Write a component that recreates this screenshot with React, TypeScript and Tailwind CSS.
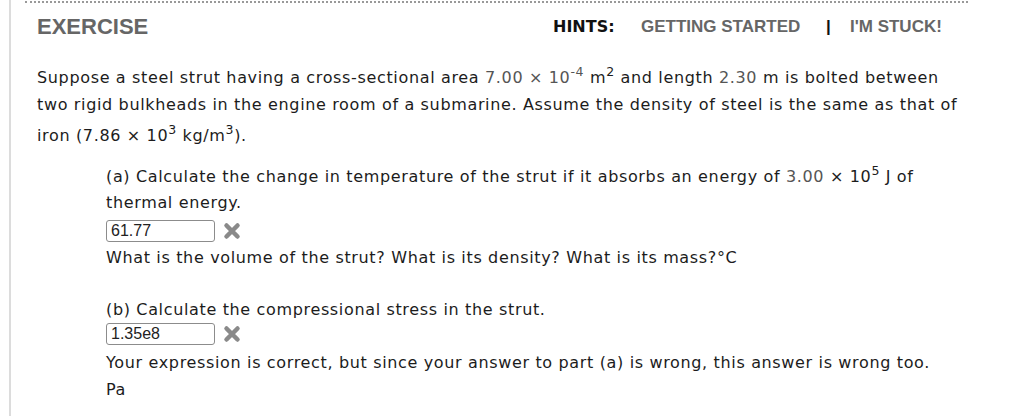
import React from "react";

const Num = ({ children }: { children: React.ReactNode }) => (
  <span className="text-[#555]">{children}</span>
);

const Sup = ({ children, gray }: { children: React.ReactNode; gray?: boolean }) => (
  <sup className={"text-[12.5px] top-[-0.6em] " + (gray ? "text-[#555]" : "")}>{children}</sup>
);

const XIcon = () => (
  <svg width="18" height="18" viewBox="0 0 18 18" className="ml-[8px]">
    <path d="M3.5 3.5 L14.5 14.5 M14.5 3.5 L3.5 14.5" stroke="#8a8a8a" strokeWidth="4.5" strokeLinecap="round" />
  </svg>
);

const Answer = ({ value }: { value: string }) => (
  <div className="flex items-center h-[22px]">
    <div className="w-[109px] h-[22px] border border-[#8c8c8c] rounded-[3px] px-[4px] flex items-center text-[16px] tracking-normal text-[#222] font-['Liberation_Sans',Arial,sans-serif]">
      {value}
    </div>
    <XIcon />
  </div>
);

export default function App() {
  return (
    <div className="w-[1024px] h-[416px] bg-white overflow-hidden flex font-['DejaVu_Sans',Verdana,sans-serif] text-[#1c1c1c]">
      <div className="w-[9px] shrink-0" />
      <div className="w-[2px] shrink-0 bg-[#dcdcdc]" />
      <div className="flex-1 pl-[14px]">
        <div className="w-[943px] border-t-2 border-dotted border-[#999] mt-[1px]" />
        <div className="flex items-center h-[47px] pl-[12px] font-['Liberation_Sans',Arial,sans-serif] font-bold whitespace-nowrap">
          <span className="text-[22px] text-[#666] w-[516px]">EXERCISE</span>
          <span className="text-[16px] text-[#111] w-[88px] font-['DejaVu_Sans',Verdana,sans-serif]">HINTS:</span>
          <span className="text-[17px] text-[#666] w-[185px]">GETTING STARTED</span>
          <span className="text-[17px] text-[#111] w-[24px]">|</span>
          <span className="text-[17px] text-[#666]">I'M STUCK!</span>
        </div>
        <div className="pl-[12px] pt-[14px] text-[16px] tracking-[0.65px] whitespace-nowrap">
          <div className="h-[27px] leading-[27px]">
            Suppose a steel strut having a cross-sectional area <Num>7.00 × 10</Num>
            <Sup gray>-4</Sup> m<Sup>2</Sup> and length <Num>2.30</Num> m is bolted between
          </div>
          <div className="h-[27px] leading-[27px]">
            two rigid bulkheads in the engine room of a submarine. Assume the density of steel is the same as that of
          </div>
          <div className="h-[27px] leading-[27px] mt-[4px]">
            iron (7.86 × 10<Sup>3</Sup> kg/m<Sup>3</Sup>).
          </div>
          <div className="pl-[69px] pt-[15px]">
            <div className="h-[26px] leading-[26px]">
              (a) Calculate the change in temperature of the strut if it absorbs an energy of <Num>3.00</Num> × 10
              <Sup>5</Sup> J of
            </div>
            <div className="h-[26px] leading-[26px]">thermal energy.</div>
            <div className="mt-[4px]">
              <Answer value="61.77" />
            </div>
            <div className="h-[26px] leading-[26px] mt-[3px]">
              What is the volume of the strut? What is its density? What is its mass?°C
            </div>
            <div className="h-[26px] leading-[26px] mt-[26px]">
              (b) Calculate the compressional stress in the strut.
            </div>
            <Answer value="1.35e8" />
            <div className="h-[26px] leading-[26px] mt-[5px]">
              Your expression is correct, but since your answer to part (a) is wrong, this answer is wrong too.
            </div>
            <div className="h-[26px] leading-[26px] mt-[1px]">Pa</div>
          </div>
        </div>
      </div>
    </div>
  );
}
